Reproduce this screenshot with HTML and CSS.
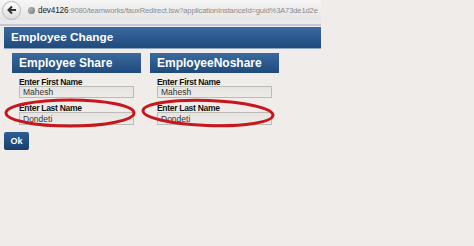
FILE: index.html
```html
<!DOCTYPE html>
<html lang="en">
<head>
  <meta charset="UTF-8">
  <title>Employee Change</title>
  <link rel="stylesheet" href="styles.css">
</head>
<body>
  <div class="window">
    <div class="toolbar">
      <span class="back-btn">
        <svg width="12" height="12" viewBox="0 0 12 12"><path d="M10 6H3M6 2.5L2.5 6 6 9.5" fill="none" stroke="#333" stroke-width="2"/></svg>
      </span>
      <span class="globe"></span>
      <span class="url"><b>dev4126</b>:9080/teamworks/fauxRedirect.lsw?applicationInstanceId=guid%3A73de1d2e</span>
    </div>
    <div class="toolbar-edge"></div>

    <div class="page">
      <div class="header">Employee Change</div>
      <div class="columns">
        <div class="column">
          <div class="panel-title">Employee Share</div>
          <div class="fields">
            <label>Enter First Name</label>
            <input type="text" class="first" value="Mahesh">
            <label>Enter Last Name</label>
            <input type="text" class="last" value="Dondeti">
            <svg class="circle" width="140" height="34" viewBox="0 0 140 34"><ellipse cx="68" cy="17" rx="64" ry="13" fill="none" stroke="#c8161c" stroke-width="3"/></svg>
          </div>
        </div>
        <div class="column">
          <div class="panel-title">EmployeeNoshare</div>
          <div class="fields">
            <label>Enter First Name</label>
            <input type="text" class="first" value="Mahesh">
            <label>Enter Last Name</label>
            <input type="text" class="last" value="Dondeti">
            <svg class="circle" width="140" height="34" viewBox="0 0 140 34"><ellipse cx="68" cy="17" rx="65" ry="12.5" transform="rotate(2 68 17)" fill="none" stroke="#c8161c" stroke-width="3"/></svg>
          </div>
        </div>
      </div>
      <button class="ok">Ok</button>
    </div>
  </div>
</body>
</html>
```

FILE: styles.css
```css
body {
  margin: 0;
  background: #efece9;
  font-family: "Liberation Sans", Arial, sans-serif;
}
.window {
  width: 321px;
}
.toolbar {
  height: 20px;
  display: flex;
  align-items: center;
  background: linear-gradient(#f6f6f6, #e4e4e4);
  overflow: hidden;
  white-space: nowrap;
}
.back-btn {
  flex: none;
  width: 17px;
  height: 17px;
  margin-left: 2px;
  border-radius: 50%;
  border: 1px solid #b8b8b8;
  background: linear-gradient(#ffffff, #dcdcdc);
  display: flex;
  align-items: center;
  justify-content: center;
}
.globe {
  flex: none;
  width: 7px;
  height: 7px;
  margin-left: 7px;
  border-radius: 50%;
  background: radial-gradient(circle at 35% 35%, #b0b0b0, #777);
}
.url {
  margin-left: 3px;
  font-size: 7.6px;
  color: #8a8a8a;
  letter-spacing: -0.15px;
}
.url b {
  color: #222;
  font-weight: normal;
  font-size: 8.2px;
}
.toolbar-edge {
  height: 4px;
  background: #e9e9ee;
  border-bottom: 2px solid #c4c8d4;
}
.page {
  padding: 0 0 0 4px;
}
.header {
  height: 21px;
  line-height: 21px;
  margin-top: 1px;
  padding-left: 7px;
  background: linear-gradient(#3a6aa0, #1f4a7c);
  color: #fff;
  font-size: 11.8px;
  font-weight: bold;
  border-bottom: 1px solid #8fa6c4;
}
.columns {
  display: flex;
  gap: 9px;
  padding-left: 8px;
  margin-top: 4px;
}
.column {
  width: 129px;
}
.panel-title {
  height: 20px;
  line-height: 20px;
  padding-left: 7px;
  background: linear-gradient(#3a6aa0, #1f4a7c);
  color: #fff;
  font-size: 12px;
  font-weight: bold;
}
.fields {
  position: relative;
  display: flex;
  flex-direction: column;
  padding: 5px 0 0 7px;
}
.fields label {
  font-size: 8.5px;
  font-weight: bold;
  letter-spacing: -0.3px;
  line-height: 9px;
  color: #111;
}
.fields input {
  box-sizing: border-box;
  width: 115px;
  margin: 0;
  padding: 0 3px;
  border: 1px solid #bdbbb8;
  background: linear-gradient(#e6e4e1, #ecebe8);
  font-family: "Liberation Sans", Arial, sans-serif;
  font-size: 8.5px;
  color: #333;
}
.fields input.first {
  height: 12px;
  margin: -1px 0 6px;
}
.fields input.last {
  height: 13px;
  margin-top: -1px;
}
.circle {
  position: absolute;
  left: -10px;
  top: 23px;
}
.ok {
  margin-top: 7px;
  width: 25px;
  height: 18px;
  padding: 0;
  border: none;
  border-radius: 2px;
  background: linear-gradient(#2f5f96, #163e6c);
  color: #fff;
  font-family: "Liberation Sans", Arial, sans-serif;
  font-size: 9px;
  font-weight: bold;
}
```
